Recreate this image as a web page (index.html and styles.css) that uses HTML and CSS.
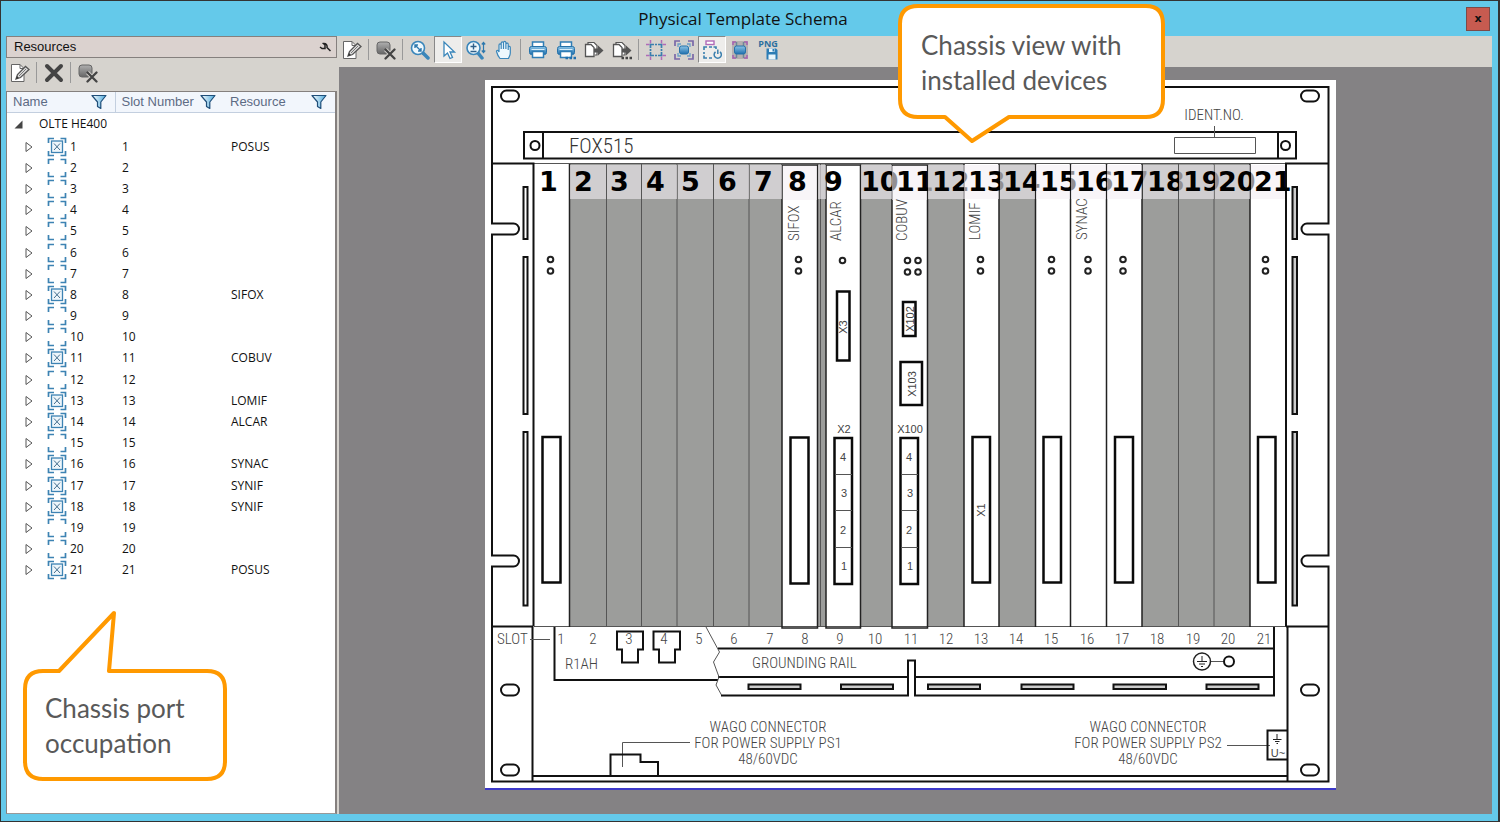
FILE: index.html
```html
<!DOCTYPE html>
<html lang="en">
<head>
<meta charset="utf-8">
<title>Physical Template Schema</title>
<link rel="stylesheet" href="styles.css">
</head>
<body>
<svg class="defs" aria-hidden="true">
  <defs>
    <linearGradient id="blue" x1="0" y1="0" x2="0" y2="1"><stop offset="0" stop-color="#8cc4e6"/><stop offset="1" stop-color="#1f6fae"/></linearGradient>
    <linearGradient id="grey" x1="0" y1="0" x2="0" y2="1"><stop offset="0" stop-color="#b0b0b0"/><stop offset="1" stop-color="#666"/></linearGradient>
    <linearGradient id="funnel-fill" x1="0" y1="0" x2="1" y2="0"><stop offset="0" stop-color="#fff"/><stop offset="1" stop-color="#4aa8dc"/></linearGradient>
    <symbol id="edit" viewBox="0 0 20 20"><path d="M1.500 1.500H10L14 5.500V18.500H1.500Z" fill="#fff" stroke="#666"/><path d="M10 1.500V5.500H14" fill="none" stroke="#666"/><path d="M6 16L7.500 11.500L15.500 3.500L19 6.500L10.500 14.500Z" fill="#ddd" stroke="#555" stroke-width="1.300"/><path d="M9 13L16 6" stroke="#777"/><path d="M6 16L7 13L9 15Z" fill="#333"/></symbol>
    <symbol id="delete" viewBox="0 0 20 20"><path d="M3 3L17 17M17 3L3 17" stroke="#444" stroke-width="4" stroke-linecap="round"/></symbol>
    <symbol id="shape-x" viewBox="0 0 20 20"><rect x="1" y="2" width="13" height="12" rx="3" fill="url(#grey)" stroke="#666"/><path d="M9.500 9.500L18.500 18.500M18.500 9.500L9.500 18.500" stroke="#d6d3ce" stroke-width="4"/><path d="M9.500 9.500L18.500 18.500M18.500 9.500L9.500 18.500" stroke="#444" stroke-width="2.300" stroke-linecap="round"/></symbol>
    <symbol id="zoom-fit" viewBox="0 0 20 20"><path d="M13 13L18 18" stroke="#3a86ba" stroke-width="3.500" stroke-linecap="round"/><circle cx="8" cy="8" r="6.500" fill="#eef8fd" stroke="#3a86ba" stroke-width="1.600"/><path d="M5 8V5H8M11 8V11H8M5 5L11 11" fill="none" stroke="#2d78ad" stroke-width="1.400"/></symbol>
    <symbol id="pointer" viewBox="0 0 20 20"><path d="M6 2V16L9.500 13L12 18.500L14.500 17.500L12 12H16.500Z" fill="#fff" stroke="#3a86ba" stroke-width="1.300"/></symbol>
    <symbol id="zoom-inout" viewBox="0 0 20 20"><path d="M12 13L16 18" stroke="#3a86ba" stroke-width="3.500" stroke-linecap="round"/><circle cx="7.500" cy="8" r="6.500" fill="#eef8fd" stroke="#3a86ba" stroke-width="1.600"/><path d="M4.500 6.500H10.500M7.500 3.500V9.500M4.500 11.500H10.500" stroke="#2d5f8a" stroke-width="1.400"/><path d="M17.500 3V12M15.800 4.500L17.500 2.500L19.200 4.500M15.800 10.500L17.500 12.500L19.200 10.500" fill="none" stroke="#2d78ad" stroke-width="1.200"/></symbol>
    <symbol id="hand" viewBox="0 0 20 20"><path d="M6 18.500C4 16 3 13.500 2.500 11.500C2.500 10 4.200 10 5 12V5C5 3.500 7 3.500 7.200 5V9V3C7.400 1.500 9.300 1.500 9.500 3V9V2.500C9.700 1 11.700 1 11.900 2.500V9V4C12.200 2.800 14 2.800 14.200 4V10V7C14.500 6 16.300 6 16.300 7.500V13C16.300 15.500 15 17 14.500 18.500Z" fill="#eef8fd" stroke="#3a86ba" stroke-width="1.200"/></symbol>
    <symbol id="printer" viewBox="0 0 20 20"><rect x="4.500" y="2" width="11" height="5" fill="#fff" stroke="#2f7db5" stroke-width="1.500"/><rect x="1.500" y="6.500" width="17" height="8" rx="2" fill="url(#blue)" stroke="#2572aa"/><rect x="4.500" y="11.500" width="11" height="6" fill="#fff" stroke="#2f7db5" stroke-width="1.500"/><path d="M3.500 9.500H16.500" stroke="#d9effa"/></symbol>
    <symbol id="dots" viewBox="0 0 20 20"><path d="M9.500 18H12M13.500 18H16M17.500 18H20" stroke="currentColor" stroke-width="2.500"/></symbol>
    <symbol id="export" viewBox="0 0 20 20"><path d="M4 4V2.500H10L13 5.500V15H11" fill="#fff" stroke="#555" stroke-width="1.200"/><path d="M1.500 4.500H7L10 7.500V16.500H1.500Z" fill="#fff" stroke="#555" stroke-width="1.300"/><path d="M10 8.500H14V5.500L19.500 10.500L14 15.500V12.500H10Z" fill="#555"/></symbol>
    <symbol id="grid" viewBox="0 0 20 20"><path d="M0 4.500H3.500M4.500 0V3.500M16.500 4.500H20M15.500 0V3.500M0 15.500H3.500M4.500 16.500V20M16.500 15.500H20M15.500 16.500V20" stroke="#b06ab8" stroke-width="1.500"/><path d="M4.500 8V4.500H8M12 4.500H15.500V8M15.500 12V15.500H12M8 15.500H4.500V12M9 4.500H11M9 15.500H11M4.500 9V11M15.500 9V11" fill="none" stroke="#3a7fae" stroke-width="1.700"/></symbol>
    <symbol id="frame" viewBox="0 0 20 20"><path d="M1 6V1H6M14 1H19V6M19 14V19H14M6 19H1V14" fill="none" stroke="#7a68a8" stroke-width="1.700"/><path d="M4 7V4H7M13 4H16V7M16 13V16H13M7 16H4V13" fill="none" stroke="#6ba0c8" stroke-width="1.300"/><rect x="5.500" y="6" width="9" height="8" rx="2" fill="url(#blue)" stroke="#2572aa"/></symbol>
    <symbol id="frame-power" viewBox="0 0 20 20"><rect x="4" y="1" width="8" height="3.500" fill="#fff" stroke="#b06ab8" stroke-width="1.400"/><path d="M2 10V7H5M7 7H10M11.500 7H14V9M2 12V14M2 15.500V18H5M7 18H10" fill="none" stroke="#3a7fae" stroke-width="1.600"/><path d="M13.500 11.800A3.600 3.600 0 1 0 18 11.800M15.800 9.500V14" fill="none" stroke="#3a7fae" stroke-width="1.500"/></symbol>
    <symbol id="frame-inner" viewBox="0 0 20 20"><rect x="2" y="1" width="16" height="18" fill="#b5b0b0"/><path d="M3 5V2H6M14 2H17V5M17 15V18H14M6 18H3V15" fill="none" stroke="#a65fb0" stroke-width="1.500"/><path d="M6.500 2V18M13.500 2V18" stroke="#6f8797" stroke-width="1.500"/><rect x="4.500" y="6" width="11" height="8" rx="2" fill="url(#blue)" stroke="#2572aa"/></symbol>
    <symbol id="disk" viewBox="0 0 12 12"><path d="M.5 .5H10L11.500 2V11.500H.5Z" fill="#2c7db5"/><path d="M3 .5H8.500V4H3ZM2.500 6.500H9.500V11.500H2.500Z" fill="#e8f5fb"/><path d="M6.500 1H8V3.500H6.500Z" fill="#2c7db5"/></symbol>
    <symbol id="funnel" viewBox="0 0 16 16"><path d="M1 1.500H15L9.800 8V14.500L6.500 12.500V8Z" fill="url(#funnel-fill)" stroke="#1f4e79" stroke-width="1.200" stroke-linejoin="round"/></symbol>
    <symbol id="wrench" viewBox="0 0 12 12"><path d="M1 6L3 7.500H6V4L4.500 2.500C7 2.200 8.500 4 8 6.500L11.500 10" fill="none" stroke="#222" stroke-width="1.500"/></symbol>
    <symbol id="closed" viewBox="0 0 8 12"><path d="M1 1.500L7 6L1 10.500Z" fill="#fff" stroke="#555"/></symbol>
    <symbol id="port" viewBox="0 0 20 20"><path d="M1.500 6V1.500H7M13.500 1.500H18.500V6M18.500 14V18.500H13.500M7 18.500H1.500V14" fill="none" stroke="#3d83b3" stroke-width="1.700"/></symbol>
    <symbol id="port-used" viewBox="0 0 20 20"><use href="#port"/><rect x="4.500" y="4" width="11" height="11.500" fill="#eef6fb" stroke="#3d83b3" stroke-width="1.300"/><path d="M7 6.500L13 13M13 6.500L7 13" stroke="#446e8e"/></symbol>
    <symbol id="oval" viewBox="0 0 22 14" overflow="visible"><rect x="2" y="1.500" width="18" height="11" rx="5.500" fill="#fff" stroke="#111" stroke-width="2"/></symbol>
  </defs>
</svg>

<div class="window">
  <header class="titlebar">
    <h1 class="title">Physical Template Schema</h1>
    <button class="close" aria-label="Close">x</button>
  </header>
  <div class="content">
    <aside class="panel">
      <div class="panel-head"><span>Resources</span><svg class="wrench"><use href="#wrench"/></svg></div>
      <div class="tools">
        <button class="tool" aria-label="Edit"><svg><use href="#edit"/></svg></button><i class="sep"></i>
        <button class="tool" aria-label="Delete"><svg><use href="#delete"/></svg></button><i class="sep"></i>
        <button class="tool" aria-label="Remove device"><svg><use href="#shape-x"/></svg></button>
      </div>
      <div class="tree-box">
      <table class="tree">
        <thead><tr>
          <th class="name-col"><span class="th">Name<svg><use href="#funnel"/></svg></span></th>
          <th class="slot-col"><span class="th">Slot Number<svg><use href="#funnel"/></svg></span></th>
          <th><span class="th">Resource<svg><use href="#funnel"/></svg></span></th>
        </tr></thead>
        <tbody>
          <tr class="root"><td colspan="3"><span class="root-name"><svg class="open" viewBox="0 0 9 9"><path d="M8.500 .5V8.500H.5Z" fill="#444"/></svg><span class="clip">OLTE HE400</span></span></td></tr>
          <tr><td><span class="node"><svg class="arrow"><use href="#closed"/></svg><svg class="port"><use href="#port-used"/></svg>1</span></td><td>1</td><td>POSUS</td></tr>
          <tr><td><span class="node"><svg class="arrow"><use href="#closed"/></svg><svg class="port"><use href="#port"/></svg>2</span></td><td>2</td><td></td></tr>
          <tr><td><span class="node"><svg class="arrow"><use href="#closed"/></svg><svg class="port"><use href="#port"/></svg>3</span></td><td>3</td><td></td></tr>
          <tr><td><span class="node"><svg class="arrow"><use href="#closed"/></svg><svg class="port"><use href="#port"/></svg>4</span></td><td>4</td><td></td></tr>
          <tr><td><span class="node"><svg class="arrow"><use href="#closed"/></svg><svg class="port"><use href="#port"/></svg>5</span></td><td>5</td><td></td></tr>
          <tr><td><span class="node"><svg class="arrow"><use href="#closed"/></svg><svg class="port"><use href="#port"/></svg>6</span></td><td>6</td><td></td></tr>
          <tr><td><span class="node"><svg class="arrow"><use href="#closed"/></svg><svg class="port"><use href="#port"/></svg>7</span></td><td>7</td><td></td></tr>
          <tr><td><span class="node"><svg class="arrow"><use href="#closed"/></svg><svg class="port"><use href="#port-used"/></svg>8</span></td><td>8</td><td>SIFOX</td></tr>
          <tr><td><span class="node"><svg class="arrow"><use href="#closed"/></svg><svg class="port"><use href="#port"/></svg>9</span></td><td>9</td><td></td></tr>
          <tr><td><span class="node"><svg class="arrow"><use href="#closed"/></svg><svg class="port"><use href="#port"/></svg>10</span></td><td>10</td><td></td></tr>
          <tr><td><span class="node"><svg class="arrow"><use href="#closed"/></svg><svg class="port"><use href="#port-used"/></svg>11</span></td><td>11</td><td>COBUV</td></tr>
          <tr><td><span class="node"><svg class="arrow"><use href="#closed"/></svg><svg class="port"><use href="#port"/></svg>12</span></td><td>12</td><td></td></tr>
          <tr><td><span class="node"><svg class="arrow"><use href="#closed"/></svg><svg class="port"><use href="#port-used"/></svg>13</span></td><td>13</td><td>LOMIF</td></tr>
          <tr><td><span class="node"><svg class="arrow"><use href="#closed"/></svg><svg class="port"><use href="#port-used"/></svg>14</span></td><td>14</td><td>ALCAR</td></tr>
          <tr><td><span class="node"><svg class="arrow"><use href="#closed"/></svg><svg class="port"><use href="#port"/></svg>15</span></td><td>15</td><td></td></tr>
          <tr><td><span class="node"><svg class="arrow"><use href="#closed"/></svg><svg class="port"><use href="#port-used"/></svg>16</span></td><td>16</td><td>SYNAC</td></tr>
          <tr><td><span class="node"><svg class="arrow"><use href="#closed"/></svg><svg class="port"><use href="#port-used"/></svg>17</span></td><td>17</td><td>SYNIF</td></tr>
          <tr><td><span class="node"><svg class="arrow"><use href="#closed"/></svg><svg class="port"><use href="#port-used"/></svg>18</span></td><td>18</td><td>SYNIF</td></tr>
          <tr><td><span class="node"><svg class="arrow"><use href="#closed"/></svg><svg class="port"><use href="#port"/></svg>19</span></td><td>19</td><td></td></tr>
          <tr><td><span class="node"><svg class="arrow"><use href="#closed"/></svg><svg class="port"><use href="#port"/></svg>20</span></td><td>20</td><td></td></tr>
          <tr><td><span class="node"><svg class="arrow"><use href="#closed"/></svg><svg class="port"><use href="#port-used"/></svg>21</span></td><td>21</td><td>POSUS</td></tr>
        </tbody>
      </table>
      </div>
      <div class="callout callout-ports">
        <svg class="bubble" viewBox="0 0 205 172"><path d="M20 61H36L91 3L86 61H184Q202 61 202 79V151Q202 169 184 169H20Q2 169 2 151V79Q2 61 20 61Z"/></svg>
        <p>Chassis port<br>occupation</p>
      </div>
    </aside>
    <main class="view">
      <div class="tools view-tools">
        <button class="tool" aria-label="Edit"><svg><use href="#edit"/></svg></button><i class="sep"></i>
        <button class="tool" aria-label="Remove device"><svg><use href="#shape-x"/></svg></button><i class="sep"></i>
        <button class="tool" aria-label="Zoom to fit"><svg><use href="#zoom-fit"/></svg></button>
        <button class="tool pressed" aria-label="Select"><svg><use href="#pointer"/></svg></button>
        <button class="tool" aria-label="Zoom"><svg><use href="#zoom-inout"/></svg></button>
        <button class="tool" aria-label="Pan"><svg><use href="#hand"/></svg></button><i class="sep"></i>
        <button class="tool" aria-label="Print"><svg><use href="#printer"/></svg></button>
        <button class="tool blue" aria-label="Print options"><svg><use href="#printer"/><use href="#dots"/></svg></button>
        <button class="tool" aria-label="Export"><svg><use href="#export"/></svg></button>
        <button class="tool" aria-label="Export options"><svg><use href="#export"/><use href="#dots"/></svg></button><i class="sep"></i>
        <button class="tool" aria-label="Grid"><svg><use href="#grid"/></svg></button>
        <button class="tool" aria-label="Fit frame"><svg><use href="#frame"/></svg></button>
        <button class="tool pressed" aria-label="Live frame"><svg><use href="#frame-power"/></svg></button>
        <button class="tool" aria-label="Inner frame"><svg><use href="#frame-inner"/></svg></button>
        <button class="tool png" aria-label="Save PNG"><span>PNG</span><svg><use href="#disk"/></svg></button>
      </div>
      <div class="canvas">
        <div class="sheet">
        <svg class="chassis" viewBox="485 80 851 710" role="img" aria-label="FOX515 chassis">
          <rect x="485" y="80" width="851" height="710" fill="#fff"/>
          <path d="M485 789H1336" stroke="#3c38c8" stroke-width="2"/>
          <path class="fill" d="M569 163H782V627H569ZM817 163H826V627H817ZM860 163H892V627H860ZM928 163H964V627H928ZM999 163H1035V627H999ZM1142 163H1250V627H1142Z"/>
          <path class="thin" d="M606.500 164V627M641.500 164V627M677 164V627M713.500 164V627M749 164V627M820.500 164V627M1178.500 164V627M1214 164V627M534 163.500H1286M534 626.500H1286"/>
          <path class="mid" d="M569.500 164V627M782 165V628H817.500V165ZM826 165V628H860.500V165ZM892 165V628H927.500V165ZM964 164V627M999 164V627M1035.500 164V627M1070.500 164V627M1106.500 164V627M1142 164V627M1250 164V627"/>
          <path class="line" d="M492 87H1328.500V223.500H1307A5.500 5.500 0 0 0 1307 234.500H1328.500V555.500H1307A5.500 5.500 0 0 0 1307 566.500H1328.500V781.500H492V566.500H513.500A5.500 5.500 0 0 0 513.500 555.500H492V234.500H513.500A5.500 5.500 0 0 0 513.500 223.500H492Z"/>
          <path class="line" d="M524 132H1296V158.500H524ZM543 132V158M1278 132V158M492 163.500H533.500V626.500M1328 163.500H1286V626.500M492 626.500H533M1286 626.500H1328M532.500 627V781M1287.500 627V781M532 776H1287"/>
          <g class="line"><circle cx="535" cy="145.500" r="4.500"/><circle cx="1285.500" cy="145.500" r="4.500"/></g>
          <use href="#oval" x="499" y="89" width="22" height="14"/><use href="#oval" x="1299" y="89" width="22" height="14"/>
          <use href="#oval" x="499" y="683" width="22" height="14"/><use href="#oval" x="1299" y="683" width="22" height="14"/>
          <use href="#oval" x="499" y="763" width="22" height="14"/><use href="#oval" x="1299" y="763" width="22" height="14"/>
          <path class="line" d="M523.500 187H527.500V239H523.500ZM523.500 257H527.500V414H523.500ZM523.500 432H527.500V605.500H523.500Z"/>
          <path class="line shade" d="M1292.500 187H1297V239H1292.500ZM1292.500 257H1297V414H1292.500ZM1292.500 432H1297V605.500H1292.500Z"/>
          <path class="bold" d="M542.500 437H560.500V582.500H542.500ZM790.500 437.500H808.500V583.500H790.500ZM834.500 438H852V584H834.500ZM900.500 438H918V584H900.500ZM972.500 437H990V582.500H972.500ZM1043.500 437H1061V582.500H1043.500ZM1115 437H1133V582.500H1115ZM1258 437H1275.500V582.500H1258ZM837 291.500H849.500V360.500H837ZM903 302H915.500V336H903ZM900.500 362H922V405H900.500Z"/>
          <path class="thin" d="M835 474.500H852M835 510.500H852M835 547.500H852M901 474.500H918M901 510.500H918M901 547.500H918M1174.500 137.500H1255.500V153.500H1174.500ZM1214.500 126V137"/>
          <g class="led"><circle cx="550.500" cy="259.500" r="2.800"/><circle cx="550.500" cy="271" r="2.800"/><circle cx="798.500" cy="259.500" r="2.800"/><circle cx="798.500" cy="271" r="2.800"/><circle cx="842.500" cy="260.500" r="2.800"/><circle cx="907.500" cy="260.500" r="2.800"/><circle cx="918" cy="260.500" r="2.800"/><circle cx="907.500" cy="272" r="2.800"/><circle cx="918" cy="272" r="2.800"/><circle cx="980.500" cy="259.500" r="2.800"/><circle cx="980.500" cy="271" r="2.800"/><circle cx="1051.500" cy="259.500" r="2.800"/><circle cx="1051.500" cy="271" r="2.800"/><circle cx="1088" cy="259.500" r="2.800"/><circle cx="1088" cy="271" r="2.800"/><circle cx="1123" cy="259.500" r="2.800"/><circle cx="1123" cy="271" r="2.800"/><circle cx="1265.500" cy="259.500" r="2.800"/><circle cx="1265.500" cy="271" r="2.800"/></g>

          <g class="num">
            <text x="539" y="191">1</text>
            <rect x="570" y="165" width="36" height="34"/><text x="574" y="191">2</text>
            <rect x="607" y="165" width="34" height="34"/><text x="610" y="191">3</text>
            <rect x="642" y="165" width="35" height="34"/><text x="646" y="191">4</text>
            <rect x="678" y="165" width="35" height="34"/><text x="681" y="191">5</text>
            <rect x="714" y="165" width="35" height="34"/><text x="718" y="191">6</text>
            <rect x="750" y="165" width="32" height="34"/><text x="754" y="191">7</text>
            <rect x="783" y="166" width="34" height="34"/><text x="788" y="191">8</text>
            <rect x="818" y="165" width="8" height="34"/><text x="824" y="191">9</text>
            <rect x="861" y="165" width="31" height="34"/><text x="861" y="191">10</text>
            <rect x="892" y="166" width="35" height="34"/><text x="896" y="191">11</text>
            <rect x="928" y="165" width="36" height="34"/><text x="932" y="191">12</text>
            <rect x="964" y="165" width="35" height="34"/><text x="968" y="191">13</text>
            <rect x="1000" y="165" width="35" height="34"/><text x="1003" y="191">14</text>
            <rect x="1036" y="165" width="34" height="34"/><text x="1040" y="191">15</text>
            <rect x="1071" y="165" width="35" height="34"/><text x="1076" y="191">16</text>
            <rect x="1107" y="165" width="35" height="34"/><text x="1111" y="191">17</text>
            <rect x="1143" y="165" width="35" height="34"/><text x="1147" y="191">18</text>
            <rect x="1179" y="165" width="35" height="34"/><text x="1183" y="191">19</text>
            <rect x="1215" y="165" width="35" height="34"/><text x="1218" y="191">20</text>
            <rect x="1251" y="165" width="34" height="34"/><text x="1254" y="191">21</text>
          </g>

          <g class="cad">
            <text class="big" x="569" y="153">FOX515</text>
            <text class="mid-text" x="1214" y="120">IDENT.NO.</text>
            <text transform="translate(799 241) rotate(-90)">SIFOX</text>
            <text transform="translate(841 241) rotate(-90)">ALCAR</text>
            <text transform="translate(907 241) rotate(-90)">COBUV</text>
            <text transform="translate(980 240) rotate(-90)">LOMIF</text>
            <text transform="translate(1087 240) rotate(-90)">SYNAC</text>
            <text x="497" y="644">SLOT</text><text x="565" y="669">R1AH</text><text x="752" y="668">GROUNDING RAIL</text>
            <g class="mid-text">
              <text x="561" y="644">1</text><text x="593" y="644">2</text><text x="629" y="644">3</text><text x="664" y="644">4</text><text x="699" y="644">5</text><text x="734" y="644">6</text><text x="770" y="644">7</text><text x="805" y="644">8</text><text x="840" y="644">9</text><text x="875" y="644">10</text><text x="911" y="644">11</text><text x="946" y="644">12</text><text x="981" y="644">13</text><text x="1016" y="644">14</text><text x="1051" y="644">15</text><text x="1087" y="644">16</text><text x="1122" y="644">17</text><text x="1157" y="644">18</text><text x="1193" y="644">19</text><text x="1228" y="644">20</text><text x="1264" y="644">21</text>
              <text x="768" y="732">WAGO CONNECTOR</text><text x="768" y="748">FOR POWER SUPPLY PS1</text><text x="768" y="764">48/60VDC</text>
              <text x="1148" y="732">WAGO CONNECTOR</text><text x="1148" y="748">FOR POWER SUPPLY PS2</text><text x="1148" y="764">48/60VDC</text>
            </g>
          </g>
          <g class="port-text">
            <text transform="translate(847 327) rotate(-90)">X3</text><text transform="translate(914 319) rotate(-90)">X102</text><text transform="translate(916 384) rotate(-90)">X103</text><text transform="translate(985 510) rotate(-90)">X1</text>
            <text x="844" y="433">X2</text><text x="910" y="433">X100</text>
            <text x="843" y="461">4</text><text x="844" y="497">3</text><text x="843" y="534">2</text><text x="844" y="570">1</text>
            <text x="909" y="461">4</text><text x="910" y="497">3</text><text x="909" y="534">2</text><text x="910" y="570">1</text>
            <text x="1278" y="757">U~</text>
          </g>

          <path class="line" d="M554.500 627V680H718M617 631.500H643V649.500H638V662.500H622V649.500H617ZM653.500 631.500H680V649.500H675V662.500H659V649.500H653.500ZM718 648.500H1274M1274 627V695.500H915V660.500H908V695.500H721M718 677H908M915 677H1274"/>
          <path class="thin" d="M530 639.500H550M706 627L719.500 652L713.500 662L719 677L716 685L721.500 695M622.500 767V742.500H690M1227 745.500H1270M1211 661.500H1224"/>
          <path class="line shade" d="M748.500 684.500H800.500V689H748.500ZM841 684.500H893V689H841ZM928 684.500H980V689H928ZM1021.500 684.500H1073.500V689H1021.500ZM1113.500 684.500H1166V689H1113.500ZM1206.500 684.500H1258.500V689H1206.500Z"/>
          <path class="line" d="M610.500 776V754.500H640.500V762H658V776M1287 730.500H1267.500V759.500H1287"/>
          <g class="mid"><circle cx="1202" cy="661.500" r="8.500"/><path d="M1202 656V661.500M1197 661.500H1207M1199 664H1205M1201 666.500H1203" stroke-width="1"/><path d="M1277 734V739M1273 739.500H1281.500M1275 741.500H1279.500M1276.500 743.500H1278" stroke-width="1"/></g>
          <circle class="line" cx="1229" cy="661.500" r="5"/>
        </svg>
        <div class="callout callout-devices">
          <svg class="bubble" viewBox="0 0 268 142"><path d="M20 3H248Q265 3 265 21V96Q265 114 248 114H111L74 138L47 114H20Q2 114 2 96V21Q2 3 20 3Z"/></svg>
          <p>Chassis view with<br>installed devices</p>
        </div>
        </div>
      </div>
    </main>
  </div>
</div>
</body>
</html>
```
FILE: styles.css
```css
* { box-sizing: border-box; }
body { margin: 0; font-family: "Open Sans", "Noto Sans", sans-serif; color: #111; }
.defs { position: absolute; width: 0; height: 0; }
svg { display: block; }
button { font: inherit; color: inherit; padding: 0; border: 0; background: none; }

.window { min-height: 100vh; display: flex; flex-direction: column; background: #64c9ea; border: 1px solid #333; border-right-width: 2px; padding: 0 6px 7px 5px; }
.titlebar { display: flex; align-items: center; height: 35px; padding-right: 2px; }
.title { flex: 1; margin: 0; padding-left: 14px; text-align: center; font-size: 17px; font-weight: 400; line-height: 24px; }
.close { width: 24px; height: 24px; background: #c75b50; border: 1px solid #7d4a48; font: bold 11px/20px "DejaVu Sans", sans-serif; }

.content { flex: 1; display: flex; background: #d6d3ce; }
.panel { position: relative; flex: none; width: 331px; display: flex; flex-direction: column; }
.panel-head { display: flex; justify-content: space-between; align-items: center; height: 22px; padding: 0 5px 0 7px; border: 1px solid #85807e; background: #dbd2cf; font: 13px/20px "Liberation Sans", Arial, sans-serif; }
.wrench { width: 12px; height: 12px; }
.tools { display: flex; align-items: center; height: 33px; padding-bottom: 4px; }
.tool { width: 28px; height: 27px; display: flex; align-items: center; justify-content: center; color: #444; }
.tool svg { width: 20px; height: 20px; }
.tool.pressed { background: #eeedeb; border: 1px solid #fff; border-top-color: #888; border-left-color: #888; }
.tool.blue { color: #1f6fae; }
.tool.png { flex-direction: column; align-items: center; font: bold 9px/9px "Open Sans", sans-serif; color: #2c6f9f; }
.tool.png svg { width: 12px; height: 12px; margin-left: 7px; }
.sep { width: 1px; height: 21px; margin: 0 3px 0 2px; background: #999; }

.tree-box { flex: 1; background: #fff; border: 1px solid #85807e; border-right-width: 2px; border-bottom-color: #999; }
.tree { width: 100%; height: 489px; table-layout: fixed; border-collapse: collapse; font-size: 12px; line-height: 16px; }
.tree th { height: 20px; padding: 0 8px 0 6px; background: #f2f6fc; border-bottom: 1px solid #c3cfdf; font: 13px/18px "Liberation Sans", Arial, sans-serif; color: #5d6b84; text-align: left; }
.tree .name-col { width: 108px; border-right: 1px solid #c3cfdf; }
.tree .slot-col { width: 109px; }
.th { display: flex; justify-content: space-between; align-items: center; }
.th svg { width: 16px; height: 16px; }
.tree td { padding: 0 0 0 7px; }
.tree td:first-child { padding: 0; }
.tree .root td { height: 24px; }
.node, .root-name { display: flex; align-items: center; }
.node { padding-left: 18px; }
.arrow { width: 8px; height: 12px; margin-right: 14px; }
.port { width: 20px; height: 20px; margin-right: 3px; }
.root-name { padding-left: 7px; }
.open { width: 9px; height: 9px; margin-right: 16px; }
.clip { max-width: 72px; overflow: hidden; white-space: nowrap; }

.view { flex: 1; display: flex; flex-direction: column; min-width: 0; }
.view-tools { height: 31px; padding-left: 1px; }
.canvas { flex: 1; display: flex; justify-content: center; align-items: flex-start; margin-left: 2px; padding: 13px 10px 24px 0; background: #848284; }
.sheet { position: relative; flex: 0 1 851px; }
.chassis { width: 100%; height: auto; }

.fill { fill: #9c9d9b; }
.thin { fill: none; stroke: #555; stroke-width: 1; }
.mid { fill: none; stroke: #222; stroke-width: 1.5; }
.line { fill: none; stroke: #111; stroke-width: 2; }
.line.shade { fill: #ccc; }
.bold { fill: none; stroke: #0a0a0a; stroke-width: 2.5; }
.led { fill: #fff; stroke: #222; stroke-width: 2; }
.num { font: bold 27px "DejaVu Sans", Verdana, sans-serif; fill: #000; }
.num rect { fill: #f4eff3; fill-opacity: .6; }
.cad { font: 300 15px "Roboto Condensed", "Liberation Sans Narrow", "DejaVu Sans Condensed", sans-serif; fill: #444; }
.big { font-size: 21px; fill: #333; }
.mid-text, .port-text { text-anchor: middle; }
.port-text { font: 11px "Liberation Sans", Arial, sans-serif; fill: #444; }

.callout { position: absolute; z-index: 2; color: #595959; font-family: Lato, "Open Sans", sans-serif; font-size: 26px; line-height: 35px; }
.callout p { position: relative; margin: 0; white-space: nowrap; }
.bubble { position: absolute; inset: 0; width: 100%; height: 100%; }
.bubble path { fill: #fff; stroke: #ff9900; stroke-width: 4; stroke-linejoin: round; }
.callout-ports { left: 17px; top: 574px; width: 205px; height: 172px; padding: 81px 0 0 22px; }
.callout-devices { left: 413px; top: -77px; width: 268px; height: 142px; padding: 25px 0 0 23px; }
```
